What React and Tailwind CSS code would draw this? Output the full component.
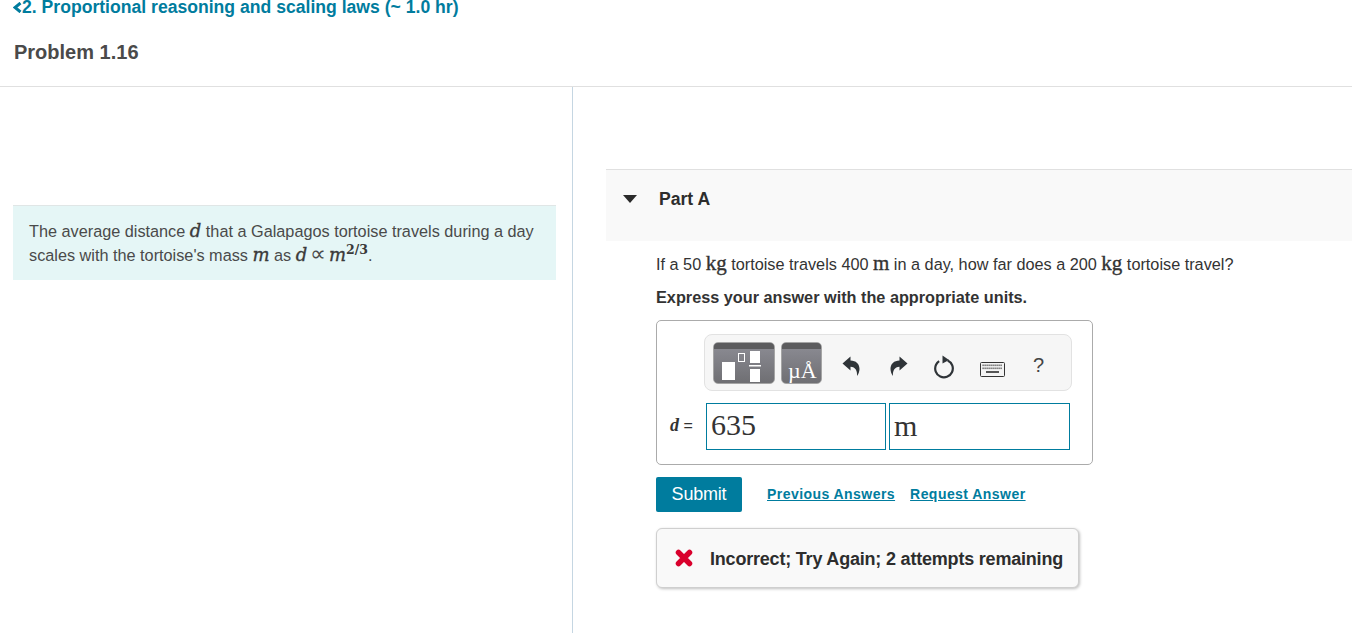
const SANS = "font-['Liberation_Sans',Arial,sans-serif]";

function MathV({ children }) {
  return <span className="font-['DejaVu_Serif',serif] italic text-[18px] leading-none text-[#3a3a3a] [-webkit-text-stroke:0.35px_#3a3a3a]">{children}</span>;
}
function Unit({ children }) {
  return <span className="font-['Liberation_Serif',serif] text-[21px] leading-none text-[#333] [-webkit-text-stroke:0.35px_#333]">{children}</span>;
}

function TemplatesIcon() {
  return (
    <div className="w-[62px] h-[42px] rounded-[5px] overflow-hidden border border-[#a5a5a5] bg-gradient-to-b from-[#8d8d95] to-[#6f6f73] flex flex-col">
      <div className="h-[6px] bg-[#5c5c5e]" />
      <svg width="60" height="34" viewBox="0 0 60 34">
        <rect x="8" y="13" width="13" height="18" fill="#fff" />
        <rect x="24.5" y="4.5" width="6" height="8" fill="none" stroke="#fff" strokeWidth="1" />
        <rect x="36" y="2" width="10" height="12" fill="#fff" />
        <rect x="35" y="16" width="12" height="1.5" fill="#fff" />
        <rect x="36" y="20" width="10" height="13" fill="#fff" />
      </svg>
    </div>
  );
}

function UnitsIcon() {
  return (
    <div className="w-[41px] h-[42px] rounded-[5px] overflow-hidden border border-[#a5a5a5] bg-gradient-to-b from-[#8d8d95] to-[#6f6f73] flex flex-col relative">
      <div className="h-[6px] bg-[#5c5c5e]" />
      <span className="absolute left-[6px] bottom-[-1px] font-['Liberation_Serif',serif] text-[22px] leading-[26px] text-white">µÅ</span>
    </div>
  );
}

function Undo() {
  return (
    <svg width="18" height="21" viewBox="0 0 18 21">
      <path d="M0.5 7.5 L8.5 0.5 V4.5 C14 4.5 17.5 8 17.5 13 C17.5 15.5 16.5 18 15 20 C15.5 15 13.5 11 8.5 10.8 V14.5 Z" fill="#2f3438" />
    </svg>
  );
}
function Redo() {
  return (
    <svg width="18" height="21" viewBox="0 0 18 21">
      <path d="M17.5 7.5 L9.5 0.5 V4.5 C4 4.5 0.5 8 0.5 13 C0.5 15.5 1.5 18 3 20 C2.5 15 4.5 11 9.5 10.8 V14.5 Z" fill="#2f3438" />
    </svg>
  );
}
function Reset() {
  return (
    <svg width="22" height="24" viewBox="0 0 22 24">
      <circle cx="11" cy="13.5" r="8.8" fill="none" stroke="#2f3438" strokeWidth="2.2" strokeDasharray="46 10" transform="rotate(-65 11 13.5)" />
      <path d="M9.5 0.5 L16 5 L9.5 8.5 Z" fill="#2f3438" />
    </svg>
  );
}
function Keyboard() {
  const keys = [];
  for (let i = 0; i < 10; i++) keys.push(<rect key={`a${i}`} x={2.5 + i * 2} y="2.5" width="1.2" height="1.6" fill="#555" />);
  for (let i = 0; i < 10; i++) keys.push(<rect key={`b${i}`} x={2.5 + i * 2} y="5.5" width="1.2" height="1.6" fill="#555" />);
  return (
    <svg width="25" height="15" viewBox="0 0 25 15">
      <rect x="0.5" y="0.5" width="24" height="14" rx="1" fill="#f4f4f4" stroke="#333" />
      {keys}
      <rect x="6" y="9" width="13" height="2" fill="#555" />
    </svg>
  );
}

export default function App() {
  return (
    <div className={`${SANS} w-[1352px] h-[633px] overflow-hidden bg-white text-[#4a4a4a] text-[16.25px]`}>
      <header className="h-[87px] border-b border-[#e0e0e0]">
        <a className="flex items-center h-[14px] pl-[13px] text-[17.6px] font-bold leading-[14px] text-[#007c9e]">
          <svg width="9" height="11" viewBox="0 0 9 11" className="shrink-0">
            <path d="M7.5 1 L2 5.5 L7.5 10" fill="none" stroke="#007c9e" strokeWidth="3" />
          </svg>
          2. Proportional reasoning and scaling laws (~ 1.0 hr)
        </a>
        <h1 className="mt-[24px] pl-[14px] text-[20px] font-bold leading-[28px] text-[#4a4a4a]">Problem 1.16</h1>
      </header>

      <div className="flex h-[546px]">
        <aside className="w-[573px] shrink-0 border-r border-[#c5d6e2] pl-[13px] pt-[118px]">
          <div className="w-[543px] h-[75px] bg-[#e5f6f6] border-t border-[#e0e6e6] pl-[16px] pt-[13px] leading-[24px] text-[#4a4a4a]">
            <p>
              The average distance <MathV>d</MathV> that a Galapagos tortoise travels during a day
            </p>
            <p>
              scales with the tortoise's mass <MathV>m</MathV> as <MathV>d</MathV><span className="mx-[3px] font-['DejaVu_Sans',sans-serif] text-[22px] leading-none">∝</span><MathV>m</MathV>
              <sup className="static font-['DejaVu_Serif',serif] font-bold text-[12.5px] leading-none align-[7px] text-[#3a3a3a]">2/3</sup>.
            </p>
          </div>
        </aside>

        <main className="flex-1 pl-[33px] pt-[82px]">
          <section className="h-[72px] bg-[#f9f9f9] border-t border-[#e0e0e0] flex items-start pt-[18px]">
            <svg width="14" height="8" viewBox="0 0 14 8" className="ml-[17px] mt-[7px]">
              <path d="M0 0 H14 L7 8 Z" fill="#2b2b2b" />
            </svg>
            <h2 className="ml-[22px] text-[17.6px] font-bold leading-[22px] text-[#2d2d2d]">Part A</h2>
          </section>

          <div className="pl-[50px]">
            <p className="mt-[11px] leading-[24px] text-[#333]">
              If a 50 <Unit>kg</Unit> tortoise travels 400 <Unit>m</Unit> in a day, how far does a 200 <Unit>kg</Unit> tortoise travel?
            </p>
            <p className="mt-[9px] leading-[24px] font-bold text-[#333]">Express your answer with the appropriate units.</p>

            <div className="mt-[11px] w-[437px] h-[145px] border border-[#ababab] rounded-[5px] pt-[13px]">
              <div className="ml-[47px] w-[368px] h-[57px] bg-[#f6f6f6] border border-[#e2e2e2] rounded-[8px] flex items-start pl-[8px]">
                <div className="mt-[7px]"><TemplatesIcon /></div>
                <div className="mt-[7px] ml-[6px]"><UnitsIcon /></div>
                <div className="mt-[21px] ml-[20px]"><Undo /></div>
                <div className="mt-[21px] ml-[30px]"><Redo /></div>
                <div className="mt-[20px] ml-[25px]"><Reset /></div>
                <div className="mt-[27px] ml-[25px]"><Keyboard /></div>
                <span className="mt-[18px] ml-[28px] text-[20px] leading-[24px] text-[#444]">?</span>
              </div>

              <div className="flex items-center mt-[12px] ml-[13px]">
                <span className="w-[36px] font-['Liberation_Serif',serif] text-[18px] leading-[20px] pb-[2px] text-[#333]"><i className="font-bold">d</i> <span className="font-['Liberation_Sans',sans-serif] text-[16px]">=</span></span>
                <div className="w-[180px] h-[47px] border border-[#007c9e] bg-white pl-[4px] font-['Liberation_Serif',serif] text-[30px] leading-[41px] text-[#333]">635</div>
                <div className="ml-[3px] w-[181px] h-[47px] border border-[#007c9e] bg-white pl-[4px] font-['Liberation_Serif',serif] text-[30px] leading-[43px] text-[#333]">m</div>
              </div>
            </div>

            <div className="mt-[12px] flex items-center">
              <button className="w-[86px] h-[35px] bg-[#007c9e] rounded-[2px] text-white text-[18px] leading-[35px] tracking-[-0.2px]">Submit</button>
              <a className="ml-[25px] text-[14px] font-bold tracking-[0.45px] text-[#007c9e] underline">Previous Answers</a>
              <a className="ml-[15px] text-[14px] font-bold tracking-[0.45px] text-[#007c9e] underline">Request Answer</a>
            </div>

            <div className="mt-[16px] w-[423px] h-[60px] bg-[#f9f9f9] border border-[#cfcfcf] rounded-[6px] shadow-[1px_1px_3px_rgba(0,0,0,0.25)] flex items-center pl-[18px]">
              <svg width="18" height="18" viewBox="0 0 18 18">
                <path d="M3.5 3.5 L14.5 14.5 M14.5 3.5 L3.5 14.5" stroke="#d9002c" strokeWidth="5.5" strokeLinecap="round" />
              </svg>
              <span className="ml-[17px] pt-[2px] text-[18px] font-bold tracking-[-0.2px] text-[#2d2d2d] leading-[24px]">Incorrect; Try Again; 2 attempts remaining</span>
            </div>
          </div>
        </main>
      </div>
    </div>
  );
}
